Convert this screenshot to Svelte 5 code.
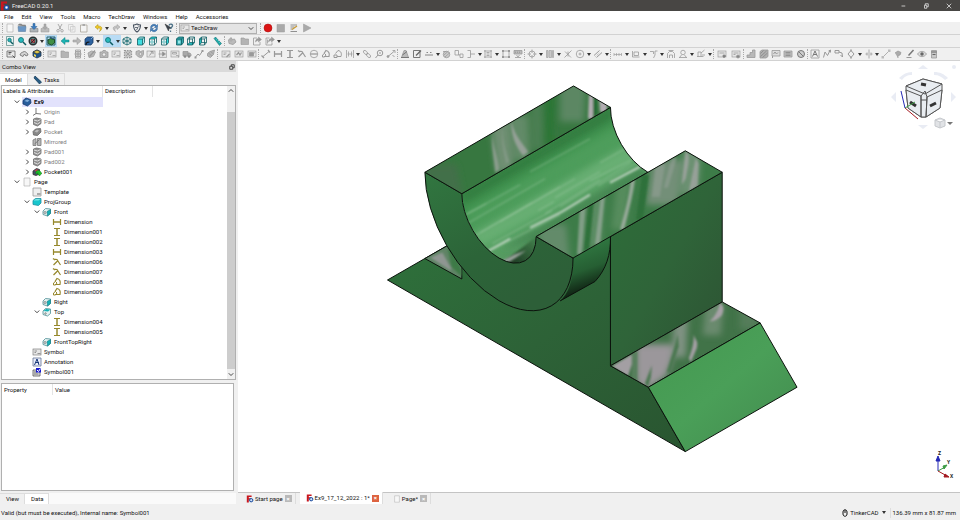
<script lang="ts">
  type TreeNode = {
    label: string
    icon: string
    depth: number
    state?: 'open' | 'closed'
    dim?: boolean
    selected?: boolean
  }

  // '|' is a separator, 'v' a drop-down arrow, a leading '!' marks a pressed tool
  const fileTools = ['new open save saveas | cut copy paste | undo v redo v | revert v refresh | whatsthis']
  const macroTools = ['record stop macro play']
  const viewTools = [
    'fitall fitsel drawstyle v !bbox | back forward link v | !zoomview !v iso | front top right | rear bottom left | measure',
    'part folder export exportall v',
  ]
  const drawTools = [
    'page redraw cubeview',
    'sheet folder globe',
    'pencil camera sheet weld clipgroup sheetin arrowbox sheet2 truck polyline spray',
    'leader symbol symbol2',
    'length horiz vert angle diameter radius radius2 extent v link2 balloon landmark',
    'hatch edit dash v hatchball shapes stack v sheetlines v frame weldsym',
    'center v thread v cross circle v parallel v',
    'ticks v boxes v ext v person user v chart v',
    'sheetplus sheetminus',
    'stairs hatchdark image stamp forbid',
    'text zigzag flag diamond v midline v slash pin brush eye db',
  ]

  const menus = ['File', 'Edit', 'View', 'Tools', 'Macro', 'TechDraw', 'Windows', 'Help', 'Accessories']

  const tree: TreeNode[] = [
    { label: 'Ex9', icon: 'doc', depth: 0, state: 'open', selected: true },
    { label: 'Origin', icon: 'origin', depth: 1, state: 'closed', dim: true },
    { label: 'Pad', icon: 'pad', depth: 1, state: 'closed', dim: true },
    { label: 'Pocket', icon: 'pocket', depth: 1, state: 'closed', dim: true },
    { label: 'Mirrored', icon: 'mirrored', depth: 1, dim: true },
    { label: 'Pad001', icon: 'pad', depth: 1, state: 'closed', dim: true },
    { label: 'Pad002', icon: 'pad', depth: 1, state: 'closed', dim: true },
    { label: 'Pocket001', icon: 'pockettip', depth: 1, state: 'closed' },
    { label: 'Page', icon: 'new', depth: 0, state: 'open' },
    { label: 'Template', icon: 'template', depth: 1 },
    { label: 'ProjGroup', icon: 'group', depth: 1, state: 'open' },
    { label: 'Front', icon: 'projview', depth: 2, state: 'open' },
    { label: 'Dimension', icon: 'horiz', depth: 3 },
    { label: 'Dimension001', icon: 'vert', depth: 3 },
    { label: 'Dimension002', icon: 'vert', depth: 3 },
    { label: 'Dimension003', icon: 'horiz', depth: 3 },
    { label: 'Dimension006', icon: 'angle', depth: 3 },
    { label: 'Dimension007', icon: 'angle', depth: 3 },
    { label: 'Dimension008', icon: 'radius', depth: 3 },
    { label: 'Dimension009', icon: 'radius', depth: 3 },
    { label: 'Right', icon: 'projview', depth: 2 },
    { label: 'Top', icon: 'projtop', depth: 2, state: 'open' },
    { label: 'Dimension004', icon: 'vert', depth: 3 },
    { label: 'Dimension005', icon: 'vert', depth: 3 },
    { label: 'FrontTopRight', icon: 'projview', depth: 2 },
    { label: 'Symbol', icon: 'sheet', depth: 1 },
    { label: 'Annotation', icon: 'annotation', depth: 1 },
    { label: 'Symbol001', icon: 'symbolcheck', depth: 1 },
  ]

  const cube = (faces: string) =>
    `${faces}<path d="M3 6l4-4h10v11l-4 5H3zM3 6h10v12M13 6l4-4" stroke="#0c5d63" stroke-width="1.6"/>`
  const sheet = (inner: string) =>
    `<rect x="2" y="4" width="16" height="12" fill="#e6e6e6" stroke-width="1.3"/>${inner}`
  const lens = '<circle cx="8" cy="8" r="5" fill="#27b9bb" stroke="#0c6c72"/><path d="M12 12l6 6" stroke="#0c5d63" stroke-width="3"/>'

  const icons: Record<string, string> = {
    logo: '<path d="M2 1h12v4H7v3h5v3H7v8H2z" fill="#c8171e" stroke="none"/><circle cx="13" cy="13" r="4.200" fill="#9fc0ee" stroke="#1c4b9b" stroke-width="2.500"/><circle cx="13" cy="13" r="1.500" fill="#fff" stroke="none"/>',
    new: '<path d="M4 2h12v16H4z" fill="#f7f7f7" stroke="#aaa" stroke-width="1.200"/>',
    open: '<path d="M2 5l2-3h5l1 2h7v3" fill="#8c8c8c" stroke="#777" stroke-width="1"/><path d="M2 7h16l-1 10H3z" fill="#6a96c5" stroke="#4d7397" stroke-width="1"/>',
    save: '<path d="M2 11h16v7H2z" fill="#aeb4b8" stroke="#777" stroke-width="1"/><path d="M8 1h4v6h4l-6 6-6-6h4z" fill="#3d7dc0" stroke="#225a92" stroke-width="1"/>',
    saveas: '<path d="M2 11h16v7H2z" fill="#bcbcbc" stroke-width="1"/><path d="M8 2h4v6h3l-5 5-5-5h3z" fill="#aaa" stroke-width="1"/>',
    cut: '<path d="M6 2l6 11M14 2L8 13"/><circle cx="6" cy="15.500" r="2.500"/><circle cx="14" cy="15.500" r="2.500"/>',
    copy: '<path d="M3 3h9v11H3zM7 7h9v11H7z" fill="#f1f1f1" stroke="#ccc"/>',
    paste: '<path d="M3 4h13v14H3z" fill="#f4f4f4" stroke="#aaa49a"/><path d="M7 2h5v4H7z" fill="#aaa" stroke="none"/>',
    undo: '<path d="M8 3L2 8l6 5v-3c5-1 5 3 3 7 7-5 6-11-3-11z" fill="#efc928" stroke="#a88c14" stroke-width="1"/>',
    redo: '<path d="M12 3l6 5-6 5v-3c-5-1-5 3-3 7-7-5-6-11 3-11z" fill="#c4c4c4" stroke-width="1"/>',
    revert: '<path d="M3 4c3 0 5-1 7-2 2 1 4 2 7 2 0 7-2 11-7 14-5-3-7-7-7-14z" stroke="#444f5d" stroke-width="2.200"/><path d="M6 9h6l-3 5M12 5l3 3" stroke="#444f5d"/>',
    refresh: '<path d="M3 9c1-7 9-8 12-4l2-2v6h-6l2-2c-3-3-6-1-7 2zM17 11c-1 7-9 8-12 4l-2 2v-6h6l-2 2c3 3 6 1 7-2z" fill="#4a83bd" stroke="#23578f" stroke-width="1"/>',
    whatsthis: '<path d="M2 2l7 14 1-5 5-1z" fill="#3a434d" stroke="#333" stroke-width="1"/><path d="M10 5c1-4 8-3 7 1-1 3-4 3-4 6M13 15v3" stroke="#4c7288" stroke-width="2.600"/>',
    record: '<circle cx="10" cy="10" r="8" fill="#dc1515" stroke="#a40a0a" stroke-width="1"/>',
    stop: '<path d="M2 3h15v15H2z" fill="#aaa" stroke="#999" stroke-width="1"/>',
    macro: '<path d="M3 4h13M3 8h8M3 12h4M3 17h13" stroke="#777"/><path d="M6 13L16 6" stroke="#c79a36" stroke-width="2.600"/>',
    play: '<path d="M3 2l15 8-15 8z" fill="#aaa" stroke="#999" stroke-width="1"/>',
    fitall: `<path d="M3 1h14v18H3z" fill="#e9f4f3" stroke="#5c8a8a" stroke-width="1.500"/><circle cx="9" cy="8" r="3.500" fill="#27b9bb" stroke="#0c6c72"/><path d="M11 11l5 5" stroke="#0c5d63" stroke-width="3"/>`,
    fitsel: lens,
    zoomview: lens,
    drawstyle: '<circle cx="10" cy="10" r="7.500" fill="#8ccbc4" stroke="#292f31" stroke-width="3"/><path d="M6 6h8v8H6z" fill="#c2474d" stroke="#292f31"/><path d="M5 15L15 5" stroke="#292f31" stroke-width="2"/>',
    bbox: '<path d="M2 2h16v16H2zM2 8h16" stroke="#27616b" stroke-width="2"/><path d="M4 8l5-3 8 2v7l-6 4-7-3z" fill="#3f8f45" stroke="#1c4d2c" stroke-width="2"/><path d="M8 2l5 3 4-1" stroke="#1b4d79" stroke-width="2"/>',
    back: '<path d="M10 3L2 10l8 7v-5h8V8h-8z" fill="#1eb4b2" stroke="#0e7c82" stroke-width="1"/>',
    forward: '<path d="M10 3l8 7-8 7v-5H2V8h8z" fill="#b8b8b8" stroke="#909090" stroke-width="1"/>',
    link: '<path d="M2 6l5-4h11v11l-4 5H2z" fill="#2e63a0" stroke="#173b66"/><path d="M4 18c0-6 4-6 7-6" stroke="#111" stroke-width="2.400"/><path d="M14 6l4-4" stroke="#9cc4ea"/>',
    iso: '<path d="M10 2l8 4v8l-8 4-8-4V6zM2 6l8 4 8-4M10 2v16M2 14l8-4 8 4" stroke="#166970" stroke-width="1.700"/>',
    front: cube('<path d="M3 6h10v12H3z" fill="#3fdde0" stroke="none"/><path d="M3 6l4-4h10v11l-4 5V6z" fill="#a7eef0" stroke="none"/>'),
    top: cube('<path d="M3 6l4-4h10l-4 4z" fill="#2fd4d8" stroke="none"/><circle cx="8" cy="12" r="2.500" stroke="#39b3b5"/>'),
    right: cube('<path d="M13 6l4-4v11l-4 5z" fill="#2fd4d8" stroke="none"/><circle cx="8" cy="12" r="2.500" stroke="#39b3b5"/>'),
    rear: cube('<path d="M3 6l4-4h10v11l-4 5H3z" fill="#35a9ad" stroke="none"/><path d="M6 9h5v6H6z" fill="#9ce9ea" stroke="none"/>'),
    bottom: cube('<path d="M3 18l4-5h10l-4 5z" fill="#27b9bb" stroke="none"/><path d="M7 2v11h10M7 13l-4 5" stroke="#0c5d63" stroke-width="1.500"/>'),
    left: cube('<path d="M3 6l4-4v11l-4 5z" fill="#27b9bb" stroke="none"/><path d="M7 2v11h10M7 13l-4 5" stroke="#0c5d63" stroke-width="1.500"/>'),
    measure: '<path d="M5 2l12 13-4 4L2 5z" fill="#1faaa8" stroke="#0c6268" stroke-width="1"/><path d="M7 7l2-2M10 10l2-2M13 13l2-2" stroke="#fff" stroke-width="1"/>',
    tasks: '<path d="M4 2l13 12-4 4L2 6z" fill="#275d85" stroke="#153a58" stroke-width="1.500"/>',
    part: '<path d="M3 8l5-5 3 4 4-1 3 6-6 5-8-2z" fill="#bbb"/><circle cx="8" cy="8" r="2" fill="#ddd"/>',
    folder: '<path d="M2 4h6l2 2h7v11H2z" fill="#b4b4b4" stroke-width="1.200"/>',
    export: '<path d="M10 4H3v14h13v-6" /><path d="M7 12c0-5 3-7 6-7V2l6 5-6 5V9c-3 0-4 1-6 3z" fill="#999" stroke-width="1"/>',
    exportall: '<path d="M9 4H2v14h12v-5M5 7v8" /><path d="M7 12c0-5 3-7 6-7V2l6 5-6 5V9c-3 0-4 1-6 3z" fill="#999" stroke-width="1"/>',
    page: '<path d="M2 4h16v12H2z" fill="#e9e9e9" stroke="#666"/><path d="M5 7h6M5 10h4M13 13l5 5" stroke="#555" stroke-width="2"/>',
    redraw: '<path d="M2 12c2-7 6-4 9-8 2 4 6 2 7 8l-4 2-3-4-3 5z" fill="#d3d3d3" stroke="#707070" stroke-width="1.700"/>',
    cubeview: '<path d="M2 6l8-4 8 4v8l-8 4-8-4z" fill="#1f568d" stroke="#253546"/><path d="M2 6l8-4 8 4-8 4z" fill="#dfc445" stroke="#253546"/><path d="M4 10l4 2v4l-4-2z" fill="#eed64c" stroke="none"/>',
    sheet: sheet('<path d="M5 8h5M5 11h3M11 13h6" stroke-width="1.500"/>'),
    sheet2: sheet('<path d="M5 7h8v3H5zM12 13h5v4" stroke-width="1.500"/>'),
    sheetin: sheet('<path d="M7 13l6-8M9 5h5v5" stroke-width="2"/>'),
    globe: '<path d="M5 2h10v16H5z"/><circle cx="10" cy="10" r="6" fill="#ccc"/><path d="M4 10h12M10 4v12"/>',
    pencil: '<path d="M2 8l7-4 8 2-4 9-9 2z" fill="#bbb"/><path d="M5 15l11-12" stroke-width="2.500"/>',
    camera: '<path d="M2 6h4l2-3h5l2 3h3v11H2z" fill="#b7b7b7"/><circle cx="10" cy="11" r="3.500" fill="#eee"/>',
    weld: '<path d="M3 3h14v14H3z" fill="#c4c4c4" stroke-dasharray="3 2" stroke-width="2.500"/><path d="M6 6l8 8M14 6l-8 8"/>',
    clipgroup: '<path d="M2 5l6-2 3 2 6-2v8l-4 6-6-1-5-5z" fill="#bbb"/><circle cx="11" cy="10" r="3" fill="#e0e0e0"/>',
    arrowbox: '<path d="M3 3h14v14H3z" fill="#e2e2e2" stroke-width="1.200"/><path d="M1 10h10M9 6l6 4-6 4z" fill="#888"/>',
    truck: '<path d="M2 5h10v9H2zM12 8h4l2 3v3h-6z" fill="#aaa"/><circle cx="6" cy="15" r="2" fill="#777"/><circle cx="14" cy="15" r="2" fill="#777"/>',
    polyline: '<path d="M3 16l5-6 3 3 6-9" stroke-width="2"/><path d="M1 15h4v4H1zM15 2h4v4h-4z" fill="#999" stroke="none"/>',
    spray: '<path d="M3 9l5-4 9-3-2 9-6 6-6-3z" fill="#b5b5b5"/><path d="M5 8l7 6M9 5l6 5"/>',
    leader: sheet('<path d="M5 8h6M5 11h4"/><path d="M11 16l6-6" stroke-width="2.500"/>'),
    symbol: sheet('<path d="M5 12l4-5 3 5 3-5" stroke-width="2.500"/>'),
    symbol2: sheet('<path d="M5 7h8v7H5z" fill="#999"/><path d="M13 9l4-3"/>'),
    length: '<path d="M4 15L16 5" stroke-width="2"/><path d="M1 13l5 5M14 2l4 5" stroke-width="2.500"/>',
    horiz: '<path d="M3 4v12M17 4v12" stroke-width="2.400"/><path d="M3 10h14" stroke-width="3"/>',
    vert: '<path d="M4 3h12M4 17h12" stroke-width="2.400"/><path d="M10 3v14" stroke-width="3"/>',
    angle: '<path d="M2 4l8 1 7 11M11 8L3 16M2 3l4 3" stroke-width="2.400"/>',
    diameter: '<circle cx="10" cy="10" r="7.500"/><path d="M3 10h14" stroke-width="2.500"/>',
    radius: '<path d="M6 9l4-6c5 1 8 6 6 12H6" stroke-width="2.400"/><path d="M3 12l4-3 3 3-3 4H3z" stroke-width="2"/>',
    radius2: '<path d="M5 9l5-6c6 1 8 6 6 12H8" stroke-width="2"/><path d="M2 12h6v5H2z" stroke-width="2"/>',
    extent: '<path d="M3 2v16M17 2v16M7 5v10M13 5v10M5 10h10" stroke-width="1.500"/>',
    link2: '<ellipse cx="7" cy="7" rx="5" ry="3" transform="rotate(45 7 7)"/><ellipse cx="13" cy="13" rx="5" ry="3" transform="rotate(45 13 13)"/>',
    balloon: '<circle cx="12" cy="8" r="5.500" stroke-width="2"/><path d="M8 12l-5 6M10 8h4" stroke-width="2"/>',
    landmark: '<path d="M4 15L17 4M13 12l4 4" stroke-width="1.800"/><circle cx="4" cy="15" r="2" fill="#999"/><path d="M13 3h5v5" />',
    hatch: '<path d="M3 17L8 3h4l5 14z" fill="#bbb"/><path d="M2 17h16M5 12l9-7" stroke="#777" stroke-width="2"/>',
    edit: '<path d="M3 3h13v14H3z" stroke="#777" stroke-width="2"/><path d="M8 13L18 3" stroke="#666" stroke-width="2.500"/>',
    dash: '<path d="M2 12h16M5 7h3M12 7h3" stroke="#888" stroke-width="2"/>',
    hatchball: '<circle cx="9" cy="11" r="6.500" fill="#ccc"/><path d="M4 12l9-8M6 16l10-9M2 5h7"/>',
    shapes: '<path d="M2 3h7v9H2zM12 10h6v7h-6zM9 12h3"/>',
    stack: '<path d="M3 3h6v14H3M9 10h9"/>',
    sheetlines: '<path d="M4 2v16M16 2v16M2 4h16M2 16h16M7 7h6M7 10h6M7 13h6"/>',
    frame: '<path d="M4 4h12v12H4z"/><path d="M2 2h4v4H2zM14 2h4v4h-4zM2 14h4v4H2zM14 14h4v4h-4z" fill="#999" stroke="none"/>',
    weldsym: '<path d="M2 3h16v7H2z" fill="#bbb"/><path d="M5 5v3M9 5v3M13 5v3M7 12l3 4 3-4M4 17h12"/>',
    center: '<circle cx="10" cy="10" r="6"/><path d="M10 1v7M10 12v7M1 10h7M12 10h7"/>',
    thread: '<path d="M3 3h3v14H3zM8 3h5v14H8zM15 3h2v14h-2z" fill="#c9c9c9" stroke-width="1.200"/>',
    cross: '<path d="M3 17L17 3M4 5l12 12M10 5v10"/>',
    circle: '<circle cx="10" cy="10" r="7.500"/><path d="M10 7v6M7 10h6"/>',
    parallel: '<path d="M2 13L13 3M7 17L18 7" stroke-width="2"/><path d="M5 15l9-8" stroke-dasharray="2 2"/>',
    ticks: '<path d="M2 8v6M7 8v6M12 8v6M17 8v6M2 11h15" stroke-width="1.300"/>',
    boxes: '<path d="M3 4v12h14M6 6h9v7H6z"/>',
    ext: '<path d="M2 5h7v5M12 4h5M12 4v8l-3 6"/>',
    person: '<path d="M3 18V9l4-4h6l4 4v9M7 18v-6h6v6M5 3h10"/>',
    user: '<circle cx="10" cy="7" r="4.500"/><path d="M3 17l4-5M17 17l-4-5M2 17h16"/>',
    chart: '<path d="M2 15h13M4 15V6h6v9M10 8l7-6M12 12h6"/>',
    sheetplus: sheet('<path d="M5 8h10"/><path d="M14 11v7M11 14h7" stroke="#666" stroke-width="2"/>'),
    sheetminus: sheet('<path d="M5 8h10M5 11h4"/><circle cx="14" cy="15" r="3" fill="#888"/>'),
    stairs: '<path d="M2 17v-5h6V7h5V2h5v15z" fill="#b8b8b8"/>',
    hatchdark: '<path d="M2 5l4-3h12v13l-4 3H2z" fill="#b0b0b0"/><path d="M3 15L15 4M3 9l6-6M7 17L17 8" stroke="#888"/>',
    image: '<path d="M2 3h16v11H2z" fill="#ddd"/><path d="M5 10l3-4 3 4 3-3M3 14v4" stroke-width="2"/>',
    stamp: '<path d="M2 4h16v12H2z" fill="#c0c0c0"/><path d="M5 7h10M5 10h10M5 13h10" stroke="#888"/>',
    forbid: '<circle cx="10" cy="10" r="7" fill="#ccc" stroke="#777" stroke-width="2"/><path d="M5 5l10 10" stroke="#777" stroke-width="2"/>',
    text: '<path d="M2 2h16v16H2z"/><path d="M5 15l5-11 5 11M7 11h6" stroke="#777" stroke-width="2"/>',
    zigzag: '<path d="M3 17l3-11 5 7 5-10M13 4l4-2v5" stroke-width="2"/>',
    flag: '<path d="M2 3h8v5H2zM10 6l6 2 1 8M13 12l4 4" stroke-width="2"/>',
    diamond: '<path d="M10 3l6 7-6 7-6-7z" stroke-width="2"/><path d="M8 1h4v4H8zM8 15h4v4H8z" fill="#aaa" stroke="none"/>',
    midline: '<path d="M10 1v18M3 10h4M13 10h4M6 7v6M14 7v6"/>',
    slash: '<path d="M3 17L17 3" stroke-width="1.500"/><path d="M1 14h5v5H1zM14 1h5v5h-5z" fill="#bbb" stroke="none"/>',
    pin: '<path d="M4 8l6-4 6 3-2 5-4 1v5" fill="#aaa"/>',
    brush: '<path d="M17 2L7 13" stroke="#777" stroke-width="3"/><path d="M3 17h10" stroke="#999" stroke-width="2"/>',
    eye: '<path d="M1 10c5-7 13-7 18 0-5 7-13 7-18 0z" fill="#ddd"/><circle cx="10" cy="10" r="3.500" fill="#666" stroke="none"/>',
    db: '<path d="M5 3h10v15H5z" fill="#c9c9c9"/><path d="M5 6h10M7 11h6" stroke="#666" stroke-width="2"/>',
    doc: '<path d="M2 7l6-5 9 3 1 7-7 6-9-4z" fill="#285e9c" stroke="#163b6c"/><path d="M5 8l5-3 5 2-4 3z" fill="#83afd9" stroke="none"/>',
    origin: '<path d="M8 2v11l10 1M8 13l-6 4" stroke="#777" stroke-width="2"/>',
    pad: '<path d="M3 4l6-2 9 2v9l-7 5-8-3z" fill="#8f8f8f" stroke="#6c6c6c"/><path d="M4 6l7 2 6-3M4 11l7 3 6-4" stroke="#ddd" stroke-width="2"/>',
    pocket: '<path d="M2 9l5-5 10-1 1 7-7 7-8-1z" fill="#888" stroke="#666"/><path d="M5 9l5-4 4 2-4 4z" fill="#bbb" stroke="none"/>',
    mirrored: '<path d="M2 6l6-3v14H2zM11 3h7v14h-7z" fill="#b7b7b7" stroke="#777"/><path d="M5 14l10-9" stroke="#777" stroke-width="2"/>',
    pockettip: '<path d="M2 8l7-5 6 2v9l-7 3-6-2z" fill="#455064" stroke="#333"/><path d="M5 7l5-3 3 3-4 3z" fill="#c44455" stroke="none"/><path d="M8 14V9c5-4 10-1 10 3h2l-5 6-5-6h3" fill="#20c32c" stroke="#0c7514" stroke-width="1"/>',
    template: '<path d="M2 2h16v16H2z" fill="#eee" stroke="#999"/><path d="M10 14h7" stroke="#666" stroke-width="2"/>',
    group: '<path d="M2 7l5-4h11v9l-5 5-11-2z" fill="#19c6cd" stroke="#1d8fa1"/><path d="M3 7l5-3h9l-4 3z" fill="#78e4e5" stroke="none"/>',
    projview: '<path d="M2 8l5-5 10 1v9l-6 5-9-3z" fill="#e6f1f1" stroke="#4b8e94"/><path d="M10 9l7-4v8l-6 5z" fill="#14b2b7" stroke="#0d6e76" stroke-width="1"/><circle cx="6" cy="11" r="2" stroke="#777"/>',
    projtop: '<path d="M2 8l5-5 10 1v9l-6 5-9-3z" fill="#e6f1f1" stroke="#4b8e94"/><path d="M3 8l5-4 9 1-5 4z" fill="#14b2b7" stroke="none"/><circle cx="7" cy="13" r="1.500" stroke="#777"/>',
    annotation: '<path d="M2 2h16v16H2z" fill="#e8edfa" stroke="#667596"/><path d="M5 16l5-12 4 12M7 11h7" stroke="#1a3a78" stroke-width="2"/>',
    symbolcheck: '<path d="M2 6h14v12H2z" fill="#e0e0e0" stroke="#555"/><path d="M4 10h6M4 14h9" stroke="#555"/><path d="M8 2h10v9H8z" fill="#1719d0" stroke="none"/><path d="M10 6l3 3 4-6" stroke="#fff" stroke-width="2"/>',
  }

  const slotUnits = (token: string) => (token.endsWith('v') && token.length < 3 ? 11 : token === '|' ? 6 : 23)
  const groupWidth = (tools: string) => {
    const units = tools.split(' ').reduce((sum, t) => sum + slotUnits(t), 13)
    return Math.round(units / 2)
  }

  let workbench = $state('TechDraw')
</script>

{#snippet icon(name: string)}
  <svg class="icon" viewBox="0 0 20 20" aria-hidden="true">{@html icons[name]}</svg>
{/snippet}

{#snippet toolGroup(tools: string)}
  <div class="group" style="width: {groupWidth(tools)}px">
    <span class="grip"></span>
    {#each tools.split(' ') as token}
      {@const pressed = token.startsWith('!')}
      {@const name = token.replace('!', '')}
      {#if name === '|'}
        <span class="sep"></span>
      {:else if name === 'v'}
        <button class="drop" class:pressed aria-label="More"><span class="arrow"></span></button>
      {:else}
        <button class="tool" class:pressed aria-label={name}>{@render icon(name)}</button>
      {/if}
    {/each}
  </div>
{/snippet}

<div class="window">
  <header class="titlebar">
    {@render icon('logo')}
    <span class="title">FreeCAD 0.20.1</span>
    <button aria-label="Minimize"><svg viewBox="0 0 8 8"><path d="M2 4h5" /></svg></button>
    <button aria-label="Restore"><svg viewBox="0 0 8 8"><path d="M2 3h3v4H2zM3 3V1h4v4H5" /></svg></button>
    <button aria-label="Close"><svg viewBox="0 0 8 8"><path d="M1 1l6 6M7 1L1 7" /></svg></button>
  </header>

  <nav class="menubar">
    {#each menus as menu}
      <button>{menu}</button>
    {/each}
  </nav>

  <div class="toolbar">
    {#each fileTools as tools}{@render toolGroup(tools)}{/each}
    <span class="grip lone"></span>
    <label class="workbench">
      {@render icon('sheet')}
      <select bind:value={workbench} aria-label="Workbench">
        <option>TechDraw</option>
        <option>Part Design</option>
      </select>
      <svg class="chevron" viewBox="0 0 8 8"><path d="M1 3l3 3 3-3" /></svg>
    </label>
    {#each macroTools as tools}{@render toolGroup(tools)}{/each}
  </div>
  <div class="toolbar">
    {#each viewTools as tools}{@render toolGroup(tools)}{/each}
  </div>
  <div class="toolbar">
    {#each drawTools as tools}{@render toolGroup(tools)}{/each}
  </div>

  <div class="workspace">
    <aside class="dock">
      <div class="dock-title">
        Combo View
        <button aria-label="Float">
          <svg class="chevron" viewBox="0 0 8 8"><path d="M1 3h4v4H1zM3 3V1h4v4H5" /></svg>
        </button>
      </div>
      <div class="tabs">
        <button class="tab active">Model</button>
        <button class="tab">{@render icon('tasks')}Tasks</button>
      </div>

      <div class="tree-box">
        <div class="tree-body">
          <div class="columns"><span>Labels &amp; Attributes</span><span>Description</span></div>
          <ul class="tree">
            {#each tree as node}
              <li
                style="padding-left: {10 + node.depth * 10}px"
                class:dim={node.dim}
                class:dimension={node.depth === 3}
              >
                <span class="twist">
                  {#if node.state}
                    <svg class="chevron" viewBox="0 0 8 8">
                      <path d={node.state === 'open' ? 'M1 2l3 3 3-3' : 'M3 1l3 3-3 3'} />
                    </svg>
                  {/if}
                </span>
                <span class="label" class:selected={node.selected}>
                  {@render icon(node.icon)}{node.label}
                </span>
              </li>
            {/each}
          </ul>
        </div>
        <div class="scrollbar">
          <svg class="chevron" viewBox="0 0 8 8"><path d="M1 5l3-3 3 3" /></svg>
          <span class="thumb"></span>
          <svg class="chevron" viewBox="0 0 8 8"><path d="M1 3l3 3 3-3" /></svg>
        </div>
      </div>

      <table class="properties">
        <thead><tr><th>Property</th><th>Value</th></tr></thead>
      </table>

      <div class="tabs bottom">
        <button class="tab">View</button>
        <button class="tab active">Data</button>
      </div>
    </aside>

    <main class="mdi">
      <div class="viewport">
        <svg class="model" viewBox="238 61 722 432" role="img" aria-label="Isometric view of Pocket001">
          <defs>
            <linearGradient id="front" x1="0" y1="0" x2="1" y2="1">
              <stop offset="0" stop-color="#2e713b" />
              <stop offset="0.500" stop-color="#2d6237" />
              <stop offset="1" stop-color="#295530" />
            </linearGradient>
            <linearGradient id="ring" x1="0" y1="0" x2="0.600" y2="1">
              <stop offset="0" stop-color="#317640" />
              <stop offset="0.600" stop-color="#2c6438" />
              <stop offset="1" stop-color="#2d5f38" />
            </linearGradient>
            <linearGradient id="side" x1="0" y1="0" x2="1" y2="1">
              <stop offset="0" stop-color="#2d6e39" />
              <stop offset="0.500" stop-color="#2f6439" />
              <stop offset="1" stop-color="#2d5233" />
            </linearGradient>
            <linearGradient id="bore" gradientUnits="userSpaceOnUse" x1="520" y1="155" x2="568" y2="238">
              <stop offset="0" stop-color="#347f42" />
              <stop offset="0.250" stop-color="#419450" />
              <stop offset="0.600" stop-color="#5aa667" />
              <stop offset="0.850" stop-color="#559960" />
              <stop offset="1" stop-color="#3c7b48" />
            </linearGradient>
            <linearGradient id="barrel" gradientUnits="userSpaceOnUse" x1="580" y1="248" x2="595" y2="290">
              <stop offset="0" stop-color="#2f7640" />
              <stop offset="0.500" stop-color="#265f33" />
              <stop offset="1" stop-color="#0d1d10" />
            </linearGradient>
            <linearGradient id="boreEnd" gradientUnits="userSpaceOnUse" x1="536" y1="240" x2="515" y2="264">
              <stop offset="0" stop-color="#417f4b" />
              <stop offset="1" stop-color="#203f26" />
            </linearGradient>
            <linearGradient id="slope" x1="0" y1="0" x2="1" y2="1">
              <stop offset="0" stop-color="#43984f" />
              <stop offset="0.500" stop-color="#4a9f58" />
              <stop offset="1" stop-color="#428a4e" />
            </linearGradient>
            <filter id="soft" x="-20%" y="-20%" width="140%" height="140%">
              <feGaussianBlur stdDeviation="3" />
            </filter>
            <filter id="fine" x="-20%" y="-20%" width="140%" height="140%">
              <feGaussianBlur stdDeviation="1" />
            </filter>
            <clipPath id="clipLeft"><path d="M573.500 86L610.500 107.500 461.500 194 424.500 172.500z" /></clipPath>
            <clipPath id="clipRight"><path d="M536 237L685.500 151 722.500 172.500 573 258.500z" /></clipPath>
            <clipPath id="clipStep"><path d="M610.500 366.500L722.500 302.500 760.500 323.500 648.500 388z" /></clipPath>
            <clipPath id="clipBore">
              <path d="M461.500 194L610.500 107.500A52.600 30.400 60 0 0 648 172.500L536 237A52.400 30.200 60 0 1 461.500 194z" />
            </clipPath>
          </defs>

          <path class="face" fill="url(#front)" d="M387 280.500L447 246 610.500 237V366.500L648.500 388 685.500 452.500z" />
          <path class="face" fill="#5f8465" d="M424.500 259L448 245.500 461.500 268V279.500z" />
          <path d="M447 246l8 8 6 16v7l-10-10z" fill="#3c7a47" filter="url(#fine)" />
          <path d="M430 258l12-5 9 16-1 2z" fill="#8f9692" filter="url(#fine)" />

          <path fill="url(#barrel)" d="M573 258L610.500 237C611 255 606 270 595 282L560 301.500C569 294 574 278 573 258z" />
          <path class="edge" d="M610.500 237C611 255 606 270 595 282L560 301.500" />

          <path fill="url(#bore)" d="M461.500 194L610.500 107.500A52.600 30.400 60 0 0 648 172.500L536 237A52.400 30.200 60 0 1 461.500 194z" />
          <g clip-path="url(#clipBore)">
            <g filter="url(#soft)">
              <path d="M466 212L630 118 626 139 470 224z" fill="#51a260" opacity="0.500" />
              <path d="M470 236L648 133 650 152 482 244z" fill="#78b981" opacity="0.500" />
              <path d="M463 196L610 110 612 118 464 202z" fill="#2d773b" opacity="0.700" />
              <path d="M500 250L640 168 648 176 536 240z" fill="#3f7f4b" opacity="0.700" />
            </g>
            <g class="streaks" filter="url(#fine)">
              <path d="M464 216L520 185M467 224L545 179M467 214L486 204M530 172L590 139" />
              <path d="M475 236L560 187M480 233L532 203M500 222L575 179M545 214L600 180" />
              <path class="bright" d="M487 252L510 239M530 228L562 212 590 195M610 183L640 167" />
              <path d="M494 249L560 215M560 207L631 163M538 211L554 202M598 186L646 158" />
              <path d="M590 181L642 155M600 163L632 145M555 198L600 172M492 244L552 211" />
            </g>
            <path fill="url(#boreEnd)" filter="url(#fine)" d="M500 266L512 256 537 236V270H500z" />
            <path d="M500 262l14-7 12-4-10 7-8 5z" fill="#97a09a" filter="url(#fine)" />
          </g>
          <path class="edge" d="M461.500 194L610.500 107.500A52.600 30.400 60 0 0 648 172.500L536 237" />

          <path
            class="face"
            fill="url(#ring)"
            d="M424.500 172.500A104.600 60.400 60 0 0 573 258.500L536 237A52.400 30.200 60 0 1 461.500 194z"
          />

          <path fill="#377740" d="M573.500 86L610.500 107.500 461.500 194 424.500 172.500z" />
          <g clip-path="url(#clipLeft)">
            <g filter="url(#soft)">
              <path d="M420 165h36l6 30h-30z" fill="#43704a" />
              <path d="M490 120h18l6 52h-18z" fill="#6f8f73" />
              <path d="M508 115h20l2 46h-16z" fill="#628a67" />
              <path d="M530 100h12l2 50h-12z" fill="#4b7f52" />
              <path d="M560 82h26l-2 40h-24z" fill="#5b8763" />
              <path d="M545 95h10l-2 50h-10z" fill="#2c7636" />
            </g>
            <g filter="url(#fine)">
              <path d="M511 120c2 12 8 20 17 32l-5 4c-8-10-12-20-12-36z" fill="#a3a6a4" opacity="0.800" />
              <path d="M492 134c1 12 5 20 7 36l-4 3c-1-14-4-24-3-39z" fill="#a0a6a1" opacity="0.700" />
              <path d="M502 126c0 14 3 24 7 36l-3 2c-3-14-5-22-4-38z" fill="#8fa092" opacity="0.600" />
              <path d="M589 92h4v27h-5zM599 96h8v16h-7z" fill="#b2adb2" />
              <path d="M594 94h3v22h-4z" fill="#286a34" />
            </g>
          </g>
          <path class="edge" d="M573.500 86L610.500 107.500 461.500 194 424.500 172.500z" />

          <path class="face" fill="url(#side)" d="M610.500 237L722.500 172.500V302.500L610.500 366.500z" />

          <path fill="#3d7c48" d="M536 237L685.500 151 722.500 172.500 573 258.500z" />
          <g clip-path="url(#clipRight)">
            <g filter="url(#soft)">
              <path d="M536 225h30l4 40h-26z" fill="#638b6a" />
              <path d="M590 195h14l-3 55h-14z" fill="#5c8c63" />
              <path d="M617 180h14l-6 50h-14z" fill="#568c5d" />
              <path d="M652 160h30l-4 45h-32z" fill="#738f78" />
              <path d="M684 145h18l-4 50h-18z" fill="#6c9172" />
            </g>
            <g filter="url(#fine)">
              <path d="M580 205h6l-4 50h-5zM601 195h4l-5 50h-5z" fill="#9dada0" opacity="0.700" />
              <path d="M631 180h4c-2 16-6 30-11 50h-4c5-18 9-32 11-50z" fill="#aab3ab" opacity="0.800" />
              <path d="M656 165h9l-5 32h-8zM672 158h5l-9 30h-4z" fill="#929f94" opacity="0.600" />
              <path d="M686 151c5 4 3 12 0 28l-4 6c1-12 2-20 4-34zM696 158l3 6-1 22-9 6z" fill="#a9a8a9" opacity="0.700" />
              <path d="M589 200h5l-5 50h-5zM642 175h7l-6 45h-7z" fill="#2f713b" />
            </g>
          </g>
          <path class="edge" d="M536 237L685.500 151 722.500 172.500 573 258.500z" />

          <path fill="#417348" d="M610.500 366.500L722.500 302.500 760.500 323.500 648.500 388z" />
          <g clip-path="url(#clipStep)">
            <g filter="url(#soft)">
              <path d="M636 345h36v18l-6 14-20 14-10-8z" fill="#9b979b" />
              <path d="M674 318h14l-2 40h-14z" fill="#7f9282" />
              <path d="M706 302h18l-3 34h-18z" fill="#6a8a6e" />
              <path d="M740 308h18v22h-18z" fill="#547d5a" />
            </g>
            <g filter="url(#fine)">
              <path d="M612 367l20-12v10l-4 12zM694 335c1 6 5 6 3 14l-6 14-2-4c3-8 5-14 5-24z" fill="#a39fa3" />
              <path d="M720 303c5 4 4 8 2 13-4 4-8 6-12 6 6-6 9-12 10-19z" fill="#a7a2a7" />
              <path d="M652 366l-1 12-3 10-3-4zM678 335l1 12-8 26-4 0 6-20z" fill="#4b7851" />
              <path d="M634 352h3v34h-5z" fill="#56805c" />
            </g>
          </g>
          <path class="edge" d="M610.500 366.500L722.500 302.500 760.500 323.500 648.500 388z" />
          <path class="face" fill="url(#slope)" d="M648.500 388L760.500 323.500 797.500 388 685.500 452.500z" />
        </svg>

        <svg class="navcube" viewBox="0 0 72 72" aria-hidden="true">
          <g class="hint">
            <path d="M30 4l5-4 5 4zM3 32l5-5v10zM68 32l-5-5v10zM30 60l5 4 5-4z" />
            <path d="M11 13c4-4 8-6 13-6v3c-5 0-8 2-10 5zM46 7c6 0 10 2 14 6l-3 2c-3-3-6-5-11-5z" />
            <circle cx="66" cy="2" r="2" />
          </g>
          <path class="side" d="M18 21l17-7 19 5v6l-2 18-14 9h-5l-13-9-2-18z" />
          <path class="side" d="M18 21l17-7 19 5-17 10zM18 25l15 6v21l-13-9zM39 32l15-7-2 18-14 9zM33 31l4-5 2 6-1 20h-5zM33 35h6" />
          <path class="mark" d="M33 19l5 1M22 37l6 4M42 41l6-3" />
          <path class="x" d="M17 43l13 11" /><path class="y" d="M17 43l10-6" /><path class="z" d="M17 43l-4-17" />
        </svg>
        <button class="cube-menu" aria-label="View cube menu">
          <svg viewBox="0 0 12 12"><path d="M1 3l5-2 5 2v6l-5 2-5-2zM1 3l5 2 5-2M6 5v6" /></svg>
          <span class="arrow"></span>
        </button>

        <svg class="axes" viewBox="0 0 26 32" aria-hidden="true">
          <path class="z" d="M9 20V9M7 10l2-5 2 5z" /><path class="y" d="M9 20l7-4M14 15l4-1-3 4z" />
          <path class="x" d="M9 20l9 5M16 23l4 3-5 0z" />
          <text x="9" y="4">Z</text><text x="18" y="13">Y</text><text x="21" y="27">X</text>
        </svg>
      </div>
      <div class="mdi-tabs">
        <div class="mdi-tab">{@render icon('logo')}Start page<button aria-label="Close Start page">×</button></div>
        <div class="mdi-tab active">
          {@render icon('logo')}Ex9_17_12_2022 : 1*<button aria-label="Close Ex9">×</button>
        </div>
        <div class="mdi-tab">{@render icon('new')}Page*<button aria-label="Close Page">×</button></div>
      </div>
    </main>
  </div>

  <footer class="status">
    <span class="message">Valid (but must be executed), Internal name: Symbol001</span>
    <button class="nav-style">
      <svg viewBox="0 0 8 8"><path d="M2 3c0-3 4-3 4 0v2c0 3-4 3-4 0zM4 1v3" /></svg>
      TinkerCAD
      <span class="arrow"></span>
    </button>
    <span class="size">136.39 mm x 81.87 mm</span>
  </footer>
</div>

<style>
  :global(body) {
    margin: 0;
  }

  .window {
    display: flex;
    flex-direction: column;
    height: 100vh;
    background: #f0f0f0;
    color: #111;
    font-family: Roboto, 'Liberation Sans', sans-serif;
    font-size: 6px;
    line-height: 10px;
    overflow: hidden;
  }

  button,
  select {
    margin: 0;
    padding: 0;
    border: 0;
    background: none;
    color: inherit;
    font: inherit;
  }

  svg {
    fill: none;
    stroke: currentColor;
  }

  .icon {
    flex: none;
    width: 10px;
    height: 10px;
    stroke-width: 1.6;
  }

  .chevron {
    flex: none;
    width: 6px;
    height: 6px;
    stroke: #444;
    stroke-width: 1.3;
  }

  .arrow {
    border: 2px solid transparent;
    border-top: 3px solid #333;
    border-bottom: 0;
  }

  .titlebar {
    display: flex;
    align-items: center;
    flex: none;
    height: 11px;
    background: #484644;
    color: #ececec;
  }

  .titlebar .title {
    flex: 1;
    padding-left: 2px;
  }

  .titlebar button {
    display: flex;
    justify-content: center;
    width: 23px;
  }

  .titlebar button svg {
    width: 6px;
    height: 6px;
  }

  .menubar {
    display: flex;
    flex: none;
    gap: 8px;
    height: 11px;
    padding-left: 4px;
    background: #fff;
  }

  .toolbar {
    display: flex;
    flex: none;
    height: 12px;
    padding-left: 2px;
    border-bottom: 1px solid #d2d2d2;
    color: #999;
  }

  .group {
    display: flex;
    flex: none;
    align-items: center;
  }

  .grip {
    flex: none;
    width: 1px;
    height: 10px;
    border-left: 1px dotted #aaa;
  }

  .grip.lone {
    align-self: center;
    margin: 0 1px;
  }

  .tool {
    display: flex;
    flex: 23 0 0;
    justify-content: center;
    align-items: center;
    height: 12px;
  }

  .drop {
    display: flex;
    flex: 11 0 0;
    justify-content: center;
    align-items: center;
    height: 12px;
  }

  .sep {
    flex: 6 0 0;
  }

  .pressed {
    background: #b9dcf5;
  }

  .workbench {
    display: flex;
    align-items: center;
    align-self: center;
    gap: 1px;
    width: 76px;
    height: 9px;
    margin-right: 3px;
    border: 1px solid #b0b0b0;
    background: #e4e4e4;
  }

  .workbench select {
    flex: 1;
    appearance: none;
    color: #111;
    outline: 0;
  }

  .workbench .chevron {
    margin-right: 2px;
  }

  .workspace {
    display: flex;
    flex: 1;
    min-height: 0;
  }

  .dock {
    display: flex;
    flex-direction: column;
    flex: none;
    width: 25%;
    max-width: 236px;
    margin-right: 2px;
  }

  .dock-title {
    display: flex;
    justify-content: space-between;
    padding: 1px 1px 0 2px;
    background: #dadada;
  }

  .dock-title button {
    display: flex;
    align-items: center;
  }

  .tabs {
    display: flex;
    margin-top: 1px;
  }

  .tab {
    display: flex;
    align-items: center;
    height: 12px;
    padding: 0 5px;
    border-right: 1px solid #ddd;
    border-top: 1px solid #ddd;
  }

  .tab.active {
    background: #fff;
  }

  .tab .icon {
    margin-right: 1px;
  }

  .tabs.bottom {
    margin-bottom: 1px;
    background: #fafafa;
  }

  .tabs.bottom .tab {
    height: 11px;
    padding: 0 5px 0 6px;
  }

  .tabs.bottom .tab:first-child {
    background: #f0f0f0;
  }

  .tree-box {
    display: flex;
    flex: 295 1 0;
    margin: 0 0 0 1px;
    border: 1px solid #b0b0b0;
    background: #fff;
    overflow: hidden;
  }

  .tree-body {
    flex: 1;
  }

  .columns {
    display: flex;
    height: 11px;
  }

  .columns span {
    box-sizing: border-box;
    width: 101px;
    padding-left: 1px;
    border-right: 1px solid #e4e4e4;
  }

  .columns span + span {
    width: 50px;
    padding-left: 2px;
  }

  .tree {
    margin: 0;
    padding: 0;
    list-style: none;
  }

  .tree li {
    display: flex;
    height: 10px;
  }

  .tree .dim {
    color: #808080;
  }

  .twist {
    display: flex;
    justify-content: center;
    align-items: center;
    width: 10px;
  }

  .label {
    display: flex;
    align-items: center;
    gap: 2px;
  }

  .label .icon {
    color: #777;
  }

  .dimension .label .icon {
    color: #96882c;
  }

  .label.selected {
    width: 81px;
    background: #e2e2fc;
    font-weight: bold;
  }

  .scrollbar {
    display: flex;
    flex-direction: column;
    align-items: center;
    justify-content: space-between;
    width: 8px;
    padding: 2px 0;
    background: #f0f0f0;
  }

  .thumb {
    flex: 1;
    width: 8px;
    margin: 18px 0 2px;
    background: #cdcdcd;
  }

  .properties {
    display: block;
    flex: 107 1 0;
    margin: 3px 2px 1px 1px;
    border: 1px solid #b0b0b0;
    border-spacing: 0;
    background: #fff;
  }

  .properties th {
    width: 48px;
    padding: 1px 0 0 2px;
    border-right: 1px solid #e4e4e4;
    font-weight: normal;
    text-align: left;
  }

  .properties th:last-child {
    border: 0;
  }

  .mdi {
    display: flex;
    flex-direction: column;
    flex: 1;
    min-width: 0;
  }

  .viewport {
    position: relative;
    flex: 1;
    min-height: 0;
    background: #fff;
  }

  .model {
    display: block;
    width: 100%;
    height: 100%;
  }

  .face,
  .edge {
    stroke: #0b120c;
    stroke-width: 1;
    stroke-linejoin: round;
  }

  .model path:not(.face, .edge) {
    stroke: none;
  }

  .model .streaks path {
    stroke: #a5cda9;
    stroke-width: 1;
    opacity: 0.6;
  }

  .model .streaks .bright {
    stroke: #d7e0d8;
    stroke-width: 2;
    opacity: 0.8;
  }

  .navcube {
    position: absolute;
    top: 4px;
    right: 0;
    width: 72px;
    height: 72px;
  }

  .hint path,
  .hint circle {
    fill: #e9ecf4;
    stroke: none;
  }

  .side {
    fill: #e9edf1;
    stroke: #555;
    stroke-width: 1;
  }

  .mark {
    stroke: #333;
    stroke-width: 3;
  }

  .x {
    fill: #a51b22;
    stroke: #a51b22;
  }

  .y {
    fill: #3d9b45;
    stroke: #3d9b45;
  }

  .z {
    fill: #2429b5;
    stroke: #2429b5;
  }

  .cube-menu {
    position: absolute;
    top: 56px;
    right: 7px;
    display: flex;
    align-items: center;
    gap: 1px;
  }

  .cube-menu .arrow {
    border-width: 3px 3px 0;
    border-top-color: #777;
  }

  .cube-menu svg {
    width: 12px;
    height: 12px;
    fill: #e1e3e6;
    stroke: #c5c8cc;
  }

  .axes {
    position: absolute;
    right: 5px;
    bottom: 9px;
    width: 26px;
    height: 32px;
  }

  .axes text {
    fill: #222;
    stroke: none;
    font-size: 5px;
    font-weight: bold;
  }

  .mdi-tabs {
    display: flex;
    flex: none;
    gap: 4px;
    height: 11px;
    padding: 0 0 1px 2px;
    border-top: 1px solid #c4c4c4;
  }

  .mdi-tab {
    display: flex;
    align-items: center;
    gap: 1px;
    padding: 0 3px 0 6px;
    border-right: 1px solid #ddd;
  }

  .mdi-tab.active {
    margin-top: -1px;
    background: #fff;
  }

  .mdi-tab .icon {
    width: 8px;
    height: 8px;
  }

  .mdi-tab button {
    width: 7px;
    height: 7px;
    margin-left: 1px;
    background: #b9b9b9;
    color: #fff;
    font-weight: bold;
    line-height: 6px;
  }

  .mdi-tab.active button {
    background: #dd6340;
  }

  .status {
    display: flex;
    align-items: center;
    flex: none;
    height: 15px;
    padding: 0 4px 0 1px;
  }

  .message {
    flex: 1;
  }

  .nav-style {
    display: flex;
    align-items: center;
    gap: 1px;
    padding-right: 4px;
    border-right: 1px solid #ddd;
  }

  .nav-style svg {
    width: 8px;
    height: 8px;
  }

  .nav-style .arrow {
    margin-left: 2px;
  }

  .size {
    padding-left: 2px;
  }
</style>
